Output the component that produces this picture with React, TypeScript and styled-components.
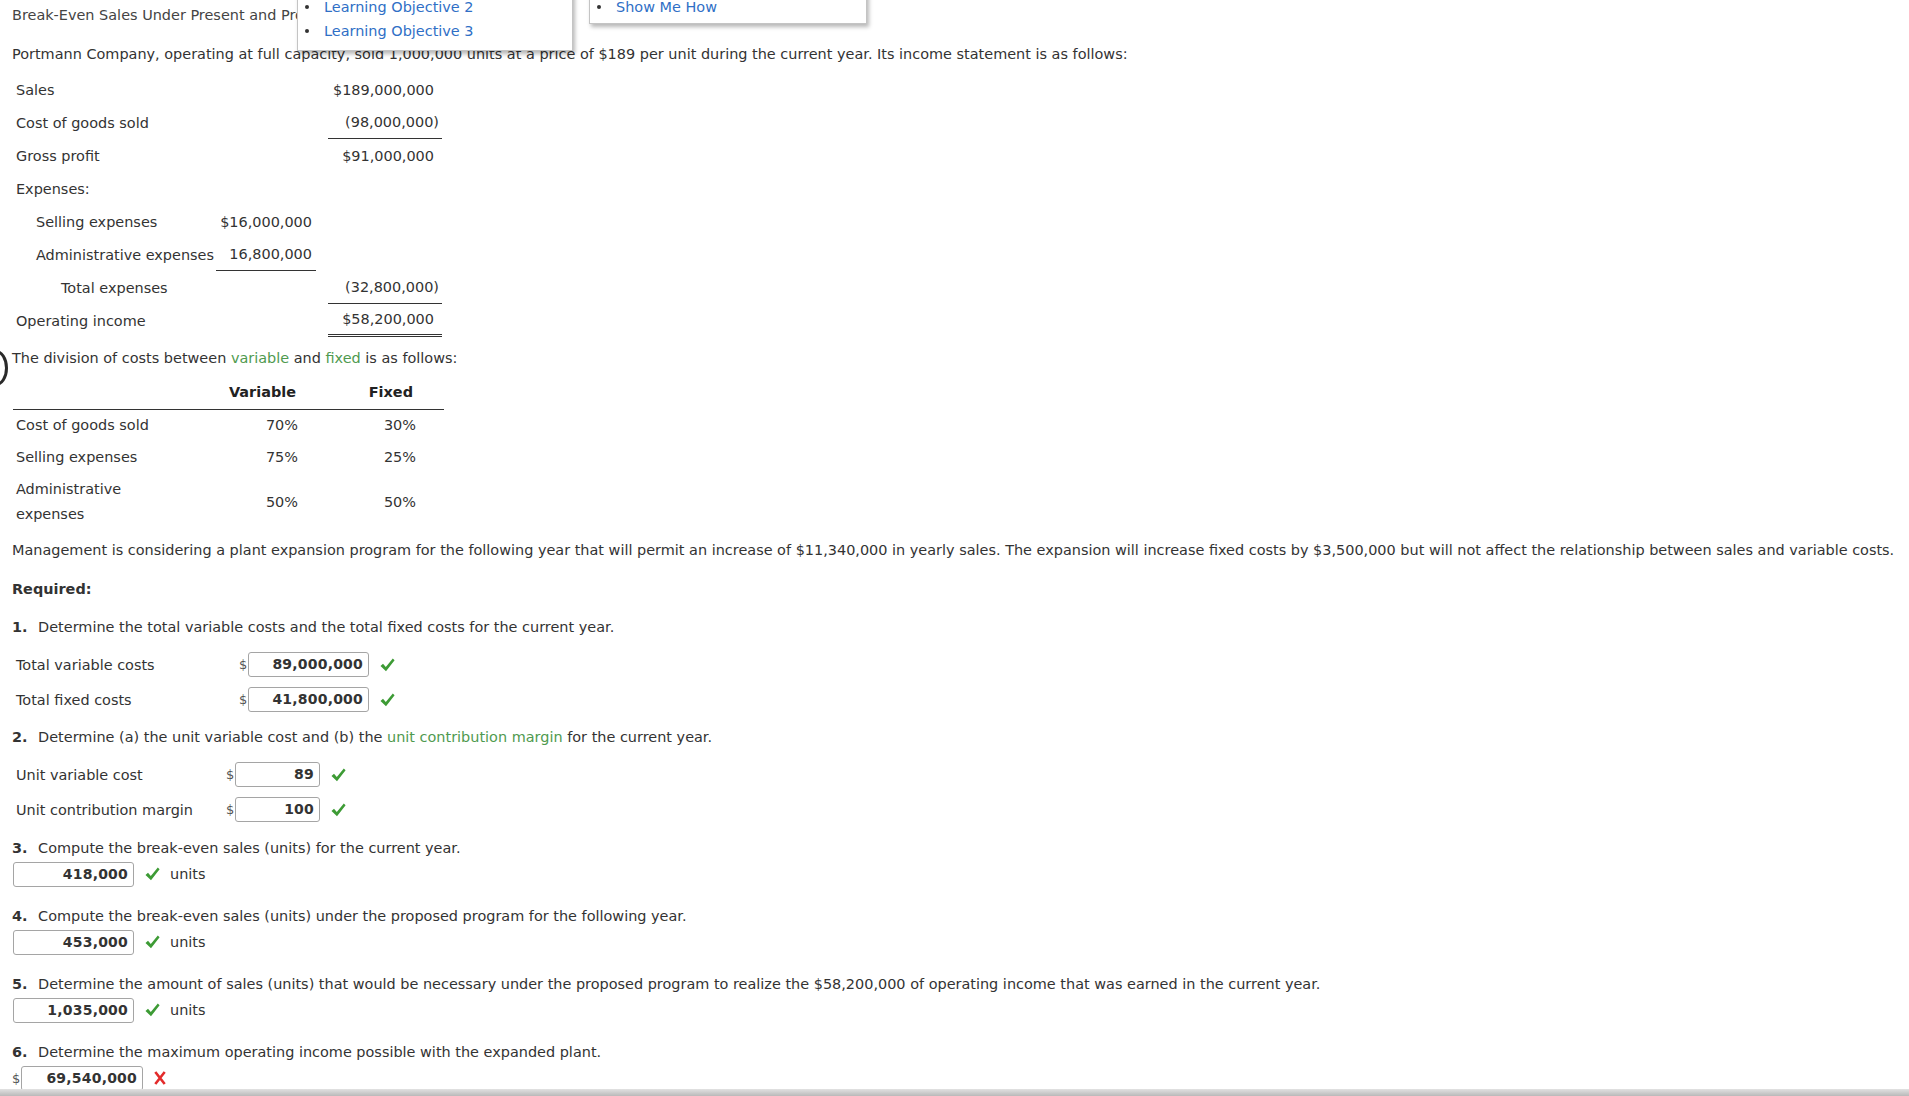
import React from 'react';
import styled, {createGlobalStyle} from 'styled-components';

const GlobalStyle = createGlobalStyle`
  html, body { margin: 0; padding: 0; background: #fff; }
  body { font-family: "DejaVu Sans", Verdana, sans-serif; font-size: 14.45px; color: #333; }
`;

const Page = styled.div`
  position: relative;
  min-height: 1096px;
  padding: 0 0 0 12px;
  overflow: hidden;
`;

const Title = styled.div`
  margin-top: 5px;
  line-height: 20px;
  color: #444;
`;

const Para = styled.p<{ $mt: number }>`
  margin: ${p => p.$mt}px 0 0;
  line-height: 20px;
`;

const Term = styled.span`
  color: #4f9a4f;
`;

const Bold = styled.div<{ $mt: number }>`
  margin-top: ${p => p.$mt}px;
  line-height: 20px;
  font-weight: bold;
  color: #333;
`;

/* popups */
const Popup = styled.ul<{ $left: number; $top: number; $width: number; $pb: number }>`
  position: absolute;
  left: ${p => p.$left}px;
  top: ${p => p.$top}px;
  width: ${p => p.$width}px;
  margin: 0;
  padding: 6px 0 ${p => p.$pb}px;
  list-style: none;
  background: #fff;
  border: 1px solid #c4c4c4;
  box-shadow: 2px 3px 4px rgba(0, 0, 0, 0.28);
  z-index: 5;
`;

const PopItem = styled.li`
  position: relative;
  padding-left: 26px;
  line-height: 24px;
  color: #2f6fc6;
  &::before {
    content: "";
    position: absolute;
    left: 7px;
    top: 10px;
    width: 4px;
    height: 4px;
    border-radius: 50%;
    background: #333;
  }
`;

const EdgeArc = styled.div`
  position: absolute;
  left: -16px;
  top: 350px;
  width: 18px;
  height: 30px;
  border-radius: 50%;
  border: 3px solid #2a2a2a;
`;

/* income statement */
const Statement = styled.table`
  margin-top: 9px;
  margin-left: 1px;
  border-collapse: separate;
  border-spacing: 0;
`;

const LabelCell = styled.td<{ $indent: number }>`
  width: ${p => 206 - p.$indent}px;
  height: 33px;
  padding: 0 0 0 ${p => p.$indent}px;
  box-sizing: border-box;
  line-height: 20px;
  white-space: nowrap;
`;

const AmountCell = styled.td<{ $w: number; $pr: number; $rule?: 'single' | 'double' }>`
  width: ${p => p.$w}px;
  height: 33px;
  box-sizing: border-box;
  padding: 0 ${p => p.$pr}px 0 0;
  text-align: right;
  white-space: nowrap;
  border-bottom: ${p =>
    p.$rule === 'double' ? '3px double #333' : p.$rule === 'single' ? '1px solid #333' : '0'};
`;

const GapCell = styled.td`
  width: 12px;
  padding: 0;
`;

/* split table */
const Split = styled.table`
  margin-top: 8px;
  margin-left: 1px;
  width: 431px;
  table-layout: fixed;
  border-collapse: collapse;
`;

const SplitCol = styled.col<{ $w: number }>`
  width: ${p => p.$w}px;
`;

const SplitHead = styled.th<{ $pr: number; $align?: string }>`
  padding: 4px ${p => p.$pr}px 4px 3px;
  line-height: 25px;
  text-align: ${p => p.$align || 'right'};
  font-weight: bold;
  color: #222;
  border-bottom: 1px solid #333;
`;

const SplitCell = styled.td<{ $pr: number; $align?: string }>`
  padding: 3px ${p => p.$pr}px 4px 3px;
  line-height: 25px;
  text-align: ${p => p.$align || 'right'};
  vertical-align: middle;
`;

/* answers */
const Question = styled.div<{ $mt: number }>`
  margin-top: ${p => p.$mt}px;
  line-height: 20px;
  b { margin-right: 6px; color: #333; }
`;

const AnswerRow = styled.div<{ $mt: number }>`
  display: flex;
  align-items: center;
  height: 35px;
  margin-top: ${p => p.$mt}px;
`;

const AnswerLabel = styled.span<{ $w: number }>`
  width: ${p => p.$w}px;
  padding-left: 4px;
  box-sizing: border-box;
`;

const Dollar = styled.span`
  width: 9px;
  font-size: 13px;
  color: #555;
`;

const Box = styled.div<{ $w: number }>`
  width: ${p => p.$w}px;
  height: 25px;
  box-sizing: border-box;
  padding: 0 5px;
  border: 1px solid #a5a5a5;
  border-radius: 3px;
  font-size: 14px;
  font-weight: bold;
  letter-spacing: 0.2px;
  line-height: 23px;
  text-align: right;
  color: #333;
`;

const InlineAnswer = styled.div<{ $mt: number; $ml?: number }>`
  display: flex;
  align-items: center;
  height: 26px;
  margin-top: ${p => p.$mt}px;
  margin-left: ${p => p.$ml ?? 1}px;
`;

const Mark = styled.span`
  display: inline-flex;
  margin-left: 11px;
`;

const Units = styled.span`
  margin-left: 10px;
`;

const BottomShade = styled.div`
  position: fixed;
  left: 0;
  right: 0;
  bottom: 0;
  height: 7px;
  background: linear-gradient(to bottom, #e2e2e2, #b9b9b9);
`;

const Check = () => (
  <svg width="15" height="14" viewBox="0 0 15 14">
    <path d="M0.5 8 L3 5.8 L5.8 9 L12.8 0.6 L14.6 2.3 L6 13.2 Z" fill="#3d9b35" />
  </svg>
);

const Cross = () => (
  <svg width="12" height="14" viewBox="0 0 12 14">
    <path d="M1.3 1 L10.7 13 M10.7 1 L1.3 13" stroke="#e32b2b" strokeWidth="2.6" />
  </svg>
);

type Line = {
  label: string;
  indent: number;
  first?: string;
  firstRule?: boolean;
  second?: string;
  secondRule?: 'single' | 'double';
};

const statement: Line[] = [
  {label: 'Sales', indent: 3, second: '$189,000,000'},
  {label: 'Cost of goods sold', indent: 3, second: '(98,000,000)', secondRule: 'single'},
  {label: 'Gross profit', indent: 3, second: '$91,000,000'},
  {label: 'Expenses:', indent: 3},
  {label: 'Selling expenses', indent: 23, first: '$16,000,000'},
  {label: 'Administrative expenses', indent: 23, first: '16,800,000', firstRule: true},
  {label: 'Total expenses', indent: 48, second: '(32,800,000)', secondRule: 'single'},
  {label: 'Operating income', indent: 3, second: '$58,200,000', secondRule: 'double'},
];

const split = [
  {label: 'Cost of goods sold', v: '70%', f: '30%'},
  {label: 'Selling expenses', v: '75%', f: '25%'},
  {label: 'Administrative expenses', v: '50%', f: '50%'},
];

const App = () => {
  return (
    <Page>
      <GlobalStyle />
      <Title>Break-Even Sales Under Present and Proposed Conditions</Title>

      <Popup $left={297} $top={-36} $width={274} $pb={7}>
        <PopItem>Learning Objective 1</PopItem>
        <PopItem>Learning Objective 2</PopItem>
        <PopItem>Learning Objective 3</PopItem>
      </Popup>
      <Popup $left={589} $top={-12} $width={276} $pb={4}>
        <PopItem>Show Me How</PopItem>
      </Popup>
      <EdgeArc />

      <Para $mt={19}>
        Portmann Company, operating at full capacity, sold 1,000,000 units at a price of $189 per unit during the
        current year. Its income statement is as follows:
      </Para>

      <Statement>
        <tbody>
          {statement.map(line => (
            <tr key={line.label}>
              <LabelCell $indent={line.indent}>{line.label}</LabelCell>
              <AmountCell $w={100} $pr={4} $rule={line.firstRule ? 'single' : undefined}>
                {line.first}
              </AmountCell>
              <GapCell />
              <AmountCell $w={114} $pr={line.second?.startsWith('(') ? 3 : 8} $rule={line.secondRule}>
                {line.second}
              </AmountCell>
            </tr>
          ))}
        </tbody>
      </Statement>

      <Para $mt={11}>
        The division of costs between <Term>variable</Term> and <Term>fixed</Term> is as follows:
      </Para>

      <Split>
        <colgroup>
          <SplitCol $w={160} />
          <SplitCol $w={130} />
          <SplitCol $w={141} />
        </colgroup>
        <thead>
          <tr>
            <SplitHead $pr={0} $align="left" />
            <SplitHead $pr={7}>Variable</SplitHead>
            <SplitHead $pr={31}>Fixed</SplitHead>
          </tr>
        </thead>
        <tbody>
          {split.map(row => (
            <tr key={row.label}>
              <SplitCell $pr={0} $align="left">{row.label}</SplitCell>
              <SplitCell $pr={5}>{row.v}</SplitCell>
              <SplitCell $pr={28}>{row.f}</SplitCell>
            </tr>
          ))}
        </tbody>
      </Split>

      <Para $mt={9} style={{whiteSpace: 'nowrap'}}>
        Management is considering a plant expansion program for the following year that will permit an increase of
        $11,340,000 in yearly sales. The expansion will increase fixed costs by $3,500,000 but will not affect the
        relationship between sales and variable costs.
      </Para>

      <Bold $mt={19}>Required:</Bold>

      <Question $mt={18}>
        <b>1.</b> Determine the total variable costs and the total fixed costs for the current year.
      </Question>
      <AnswerRow $mt={10}>
        <AnswerLabel $w={227}>Total variable costs</AnswerLabel>
        <Dollar>$</Dollar>
        <Box $w={121}>89,000,000</Box>
        <Mark><Check /></Mark>
      </AnswerRow>
      <AnswerRow $mt={0}>
        <AnswerLabel $w={227}>Total fixed costs</AnswerLabel>
        <Dollar>$</Dollar>
        <Box $w={121}>41,800,000</Box>
        <Mark><Check /></Mark>
      </AnswerRow>

      <Question $mt={10}>
        <b>2.</b> Determine (a) the unit variable cost and (b) the <Term>unit contribution margin</Term> for the
        current year.
      </Question>
      <AnswerRow $mt={10}>
        <AnswerLabel $w={214}>Unit variable cost</AnswerLabel>
        <Dollar>$</Dollar>
        <Box $w={85}>89</Box>
        <Mark><Check /></Mark>
      </AnswerRow>
      <AnswerRow $mt={0}>
        <AnswerLabel $w={214}>Unit contribution margin</AnswerLabel>
        <Dollar>$</Dollar>
        <Box $w={85}>100</Box>
        <Mark><Check /></Mark>
      </AnswerRow>

      <Question $mt={11}>
        <b>3.</b> Compute the break-even sales (units) for the current year.
      </Question>
      <InlineAnswer $mt={3}>
        <Box $w={121}>418,000</Box>
        <Mark><Check /></Mark>
        <Units>units</Units>
      </InlineAnswer>

      <Question $mt={19}>
        <b>4.</b> Compute the break-even sales (units) under the proposed program for the following year.
      </Question>
      <InlineAnswer $mt={3}>
        <Box $w={121}>453,000</Box>
        <Mark><Check /></Mark>
        <Units>units</Units>
      </InlineAnswer>

      <Question $mt={19}>
        <b>5.</b> Determine the amount of sales (units) that would be necessary under the proposed program to realize
        the $58,200,000 of operating income that was earned in the current year.
      </Question>
      <InlineAnswer $mt={3}>
        <Box $w={121}>1,035,000</Box>
        <Mark><Check /></Mark>
        <Units>units</Units>
      </InlineAnswer>

      <Question $mt={19}>
        <b>6.</b> Determine the maximum operating income possible with the expanded plant.
      </Question>
      <InlineAnswer $mt={3} $ml={0}>
        <Dollar>$</Dollar>
        <Box $w={122}>69,540,000</Box>
        <Mark><Cross /></Mark>
      </InlineAnswer>

      <BottomShade />
    </Page>
  );
};

export default App;
